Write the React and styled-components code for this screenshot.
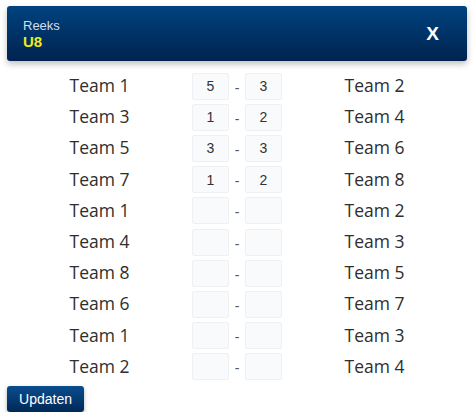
import React from 'react'
import styled, { createGlobalStyle } from 'styled-components'

const GlobalStyle = createGlobalStyle`
  body {
    margin: 0;
    background: #fff;
    font-family: 'Liberation Sans', Arial, sans-serif;
  }
`

const Page = styled.div`
  padding: 6px 7px 0;
  width: 474px;
  box-sizing: border-box;
`

const Header = styled.header`
  align-items: center;
  background: linear-gradient(#00427f, #00234f);
  border-radius: 3px;
  box-shadow: 0 3px 6px rgba(0, 0, 0, 0.25);
  color: #fff;
  display: flex;
  height: 55px;
  justify-content: space-between;
  padding: 0 28px 0 16px;
  box-sizing: border-box;
`

const Titles = styled.div`
  display: flex;
  flex-direction: column;
  padding-top: 2px;
`

const Label = styled.span`
  color: #d6dde8;
  font-size: 13px;
  line-height: 15px;
`

const Series = styled.span`
  color: #eeea1c;
  font-size: 15px;
  font-weight: bold;
  line-height: 18px;
`

const Close = styled.button`
  background: none;
  border: 0;
  color: #fff;
  cursor: pointer;
  font-family: inherit;
  font-size: 19px;
  font-weight: bold;
  padding: 0;
`

const Matches = styled.div`
  display: grid;
  grid-template-columns: 185px 90px 185px;
  grid-auto-rows: 31.2px;
  margin-top: 9.5px;
`

const Team = styled.span`
  align-self: center;
  color: #2e2e2e;
  font-family: 'Open Sans', sans-serif;
  font-size: 17.5px;
  text-align: center;
  margin-top: -2px;
`

const Score = styled.div`
  align-items: center;
  display: flex;
  justify-content: space-between;
`

const ScoreInput = styled.input`
  background: #f9fafc;
  border: 1px solid #eef0f3;
  border-radius: 2px;
  box-sizing: border-box;
  color: #333;
  font-family: 'Liberation Sans', Arial, sans-serif;
  font-size: 14px;
  height: 27px;
  padding: 0;
  text-align: center;
  width: 37px;
  outline: none;
`

const Dash = styled.span`
  color: #555;
  font-size: 14px;
  margin-top: 3px;
`

const UpdateButton = styled.button`
  background: linear-gradient(#0b4d8e, #002856);
  border: 0;
  border-radius: 3px;
  box-shadow: 0 2px 4px rgba(0, 0, 0, 0.3);
  color: #fff;
  cursor: pointer;
  font-family: 'Liberation Sans', Arial, sans-serif;
  font-size: 14px;
  height: 26px;
  margin-top: 4px;
  padding: 0;
  width: 77px;
`

const matches = [
  ['Team 1', 'Team 2', '5', '3'],
  ['Team 3', 'Team 4', '1', '2'],
  ['Team 5', 'Team 6', '3', '3'],
  ['Team 7', 'Team 8', '1', '2'],
  ['Team 1', 'Team 2', '', ''],
  ['Team 4', 'Team 3', '', ''],
  ['Team 8', 'Team 5', '', ''],
  ['Team 6', 'Team 7', '', ''],
  ['Team 1', 'Team 3', '', ''],
  ['Team 2', 'Team 4', '', ''],
]

const App = () => (
  <Page>
    <GlobalStyle />
    <Header>
      <Titles>
        <Label>Reeks</Label>
        <Series>U8</Series>
      </Titles>
      <Close>X</Close>
    </Header>
    <Matches>
      {matches.map(([home, away, homeScore, awayScore], i) => (
        <React.Fragment key={i}>
          <Team>{home}</Team>
          <Score>
            <ScoreInput defaultValue={homeScore} />
            <Dash>-</Dash>
            <ScoreInput defaultValue={awayScore} />
          </Score>
          <Team>{away}</Team>
        </React.Fragment>
      ))}
    </Matches>
    <UpdateButton>Updaten</UpdateButton>
  </Page>
)

export default App
